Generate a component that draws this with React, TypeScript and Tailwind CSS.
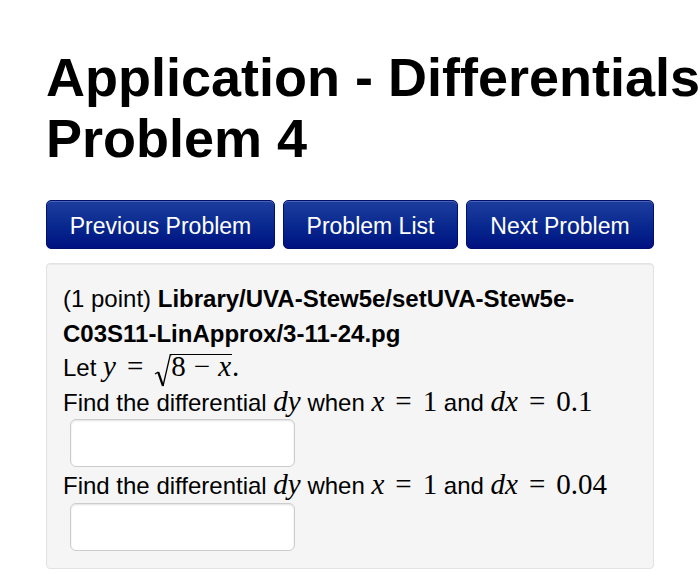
import React from "react";

const M = ({ children }: { children: React.ReactNode }) => (
  <span className="font-['Liberation_Serif',serif] text-[29px] leading-none italic">{children}</span>
);
const R = ({ children }: { children: React.ReactNode }) => (
  <span className="font-['Liberation_Serif',serif] text-[29px] leading-none">{children}</span>
);
const Eq = () => (
  <span className="mx-[11px] font-['Liberation_Serif',serif] text-[29px] leading-none">=</span>
);

function Radical() {
  return (
    <span className="relative ml-[17px] inline-block border-t-[1.4px] border-black pr-[1px] font-['Liberation_Serif',serif] text-[29px] leading-[23px]">
      <svg width="18" height="34" viewBox="0 0 18 34" className="absolute left-[-17px] top-[-1.4px] overflow-visible">
        <path d="M1 20 L4.2 18" fill="none" stroke="#000" strokeWidth="1.2" />
        <path d="M4.2 18 L9 32" fill="none" stroke="#000" strokeWidth="2.3" />
        <path d="M9 32 L16.3 0.7 L18 0.7" fill="none" stroke="#000" strokeWidth="1.3" />
      </svg>
      8<span className="mx-[8px]">−</span>
      <span className="italic">x</span>
    </span>
  );
}

function Btn({ label, w }: { label: string; w: string }) {
  return (
    <button
      className={`${w} h-[49px] rounded-[5px] border border-[#001070] bg-linear-to-b from-[#1d3e9f] to-[#000f80] pt-[3px] text-[23px] text-white shadow-[inset_0_1px_0_rgba(255,255,255,0.2)]`}
    >
      {label}
    </button>
  );
}

function Input({ cls }: { cls: string }) {
  return (
    <div className={`${cls} ml-[7px] h-[48px] w-[225px] rounded-[6px] border border-[#cccccc] bg-white shadow-[inset_0_1px_2px_rgba(0,0,0,0.12)]`} />
  );
}

export default function App() {
  return (
    <div className="h-[583px] w-[700px] overflow-hidden bg-white font-['Liberation_Sans',Arial,sans-serif] text-black">
      <div className="pl-[46px] pt-[47px]">
        <h1 className="whitespace-nowrap text-[54px] font-bold leading-[61px]">
          <div>Application - Differentials</div>
          <div>Problem 4</div>
        </h1>
        <div className="mt-[31px] flex gap-[8px]">
          <Btn label="Previous Problem" w="w-[229px]" />
          <Btn label="Problem List" w="w-[175px]" />
          <Btn label="Next Problem" w="w-[188px]" />
        </div>
        <div className="mt-[14px] w-[608px] rounded-[4px] border border-[#e3e3e3] bg-[#f5f5f5] px-[16px] pb-[17px] pt-[18px] text-[24px] leading-[34.5px] shadow-[inset_0_1px_1px_rgba(0,0,0,0.05)]">
          <div className="h-[69px]">
            (1 point) <b>Library/UVA-Stew5e/setUVA-Stew5e-</b>
            <br />
            <b>C03S11-LinApprox/3-11-24.pg</b>
          </div>
          <div className="h-[34.5px] whitespace-nowrap">
            Let <M>y</M>
            <Eq />
            <Radical />
            <R>.</R>
          </div>
          <div className="h-[34.5px] whitespace-nowrap">
            Find the differential <M>dy</M> when <M>x</M>
            <Eq />
            <R>1</R> and <M>dx</M>
            <Eq />
            <R>0.1</R>
          </div>
          <Input cls="mt-[-1px]" />
          <div className="mt-[2px] h-[34.5px] whitespace-nowrap">
            Find the differential <M>dy</M> when <M>x</M>
            <Eq />
            <R>1</R> and <M>dx</M>
            <Eq />
            <R>0.04</R>
          </div>
          <Input cls="mt-[-0.5px]" />
        </div>
      </div>
    </div>
  );
}
